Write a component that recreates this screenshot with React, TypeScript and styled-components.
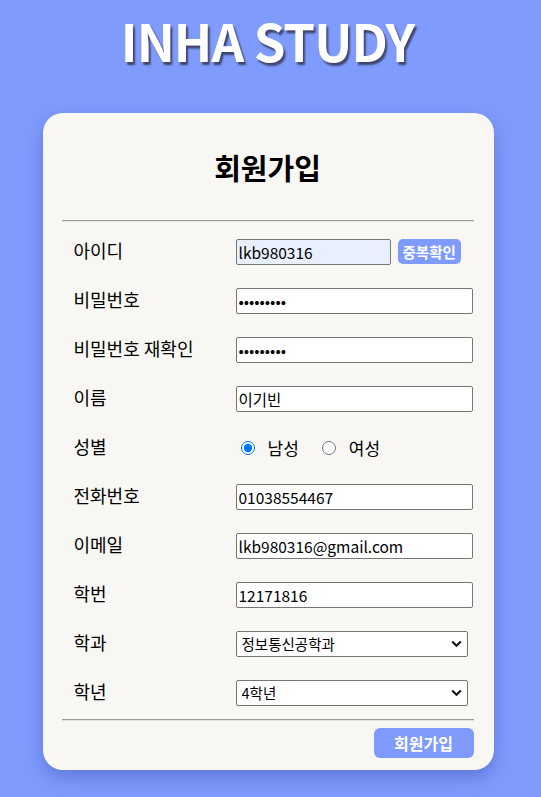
import React from "react";
import styled, { createGlobalStyle } from "styled-components";

const GlobalStyle = createGlobalStyle`
  html, body {
    margin: 0;
    padding: 0;
    background: #7f9bfe;
    font-family: "Noto Sans CJK KR", "Noto Sans", sans-serif;
  }
`;

const Page = styled.div`
  width: 541px;
  min-height: 797px;
  background: #7f9bfe;
  display: flex;
  flex-direction: column;
  align-items: center;
`;

const Logo = styled.h1`
  margin: 0 0 0 -6px;
  height: 113px;
  display: flex;
  align-items: flex-start;
  padding-top: 9px;
  box-sizing: border-box;
  color: #ffffff;
  font-size: 51px;
  font-weight: 700;
  letter-spacing: -1px;
  line-height: 62px;
  text-shadow: 2px 3px 2px rgba(40, 40, 60, 0.75);
`;

const Card = styled.div`
  width: 451px;
  box-sizing: border-box;
  margin-left: -5px;
  padding: 34px 20px 12px 19px;
  background: #f8f7f3;
  border-radius: 20px;
  box-shadow: 0 8px 18px rgba(40, 60, 150, 0.35);
`;

const Heading = styled.h2`
  margin: 0;
  height: 40px;
  line-height: 40px;
  text-align: center;
  font-size: 29px;
  font-weight: 700;
  color: #000;
`;

const Divider = styled.div<{ $top: number }>`
  height: 1px;
  margin-top: ${(p) => p.$top}px;
  background: #9a9a9a;
  border-bottom: 1px solid #e4e3df;
`;

const Rows = styled.div`
  display: flex;
  flex-direction: column;
  padding-top: 5px;
`;

const Row = styled.div`
  height: 49px;
  display: flex;
  align-items: center;
  padding-left: 12px;
`;

const Label = styled.label`
  width: 162px;
  flex-shrink: 0;
  font-size: 18px;
  color: #000;
  margin-top: -4px;
`;

const TextInput = styled.input<{ $width?: number; $filled?: boolean }>`
  width: ${(p) => p.$width ?? 237}px;
  height: 26px;
  box-sizing: border-box;
  border: 1px solid #767676;
  border-radius: 2px;
  padding: 0 2px;
  background: ${(p) => (p.$filled ? "#e8f0fe" : "#ffffff")};
  font-family: "Noto Sans CJK KR", "Noto Sans", sans-serif;
  font-size: 15.5px;
  color: #000;
  outline: none;
`;

const SmallButton = styled.button`
  margin-left: 7px;
  height: 25px;
  padding: 0 5px;
  border: none;
  border-radius: 5px;
  background: #7f9bfe;
  color: #ffffff;
  font-family: "Noto Sans CJK KR", "Noto Sans", sans-serif;
  font-size: 14.5px;
  font-weight: 700;
`;

const RadioGroup = styled.div`
  display: flex;
  align-items: center;
`;

const RadioOption = styled.label`
  display: flex;
  align-items: center;
  font-size: 17px;
  margin-right: 18px;
  input {
    width: 14px;
    height: 14px;
    margin: 0 13px 0 5px;
  }
`;

const SelectBox = styled.div`
  position: relative;
  width: 232px;
  height: 26px;
`;

const Select = styled.select`
  width: 100%;
  height: 100%;
  box-sizing: border-box;
  appearance: none;
  border: 1px solid #767676;
  border-radius: 2px;
  background: #ffffff;
  font-family: "Noto Sans CJK KR", "Noto Sans", sans-serif;
  font-size: 14.5px;
  color: #000;
  padding: 0 24px 0 5px;
`;

const Chevron = styled.svg`
  position: absolute;
  right: 6px;
  top: 9px;
  width: 11px;
  height: 8px;
  pointer-events: none;
`;

const Footer = styled.div`
  display: flex;
  justify-content: flex-end;
  padding-top: 7px;
`;

const SubmitButton = styled.button`
  width: 100px;
  height: 30px;
  border: none;
  border-radius: 6px;
  background: #7f9bfe;
  color: #ffffff;
  font-family: "Noto Sans CJK KR", "Noto Sans", sans-serif;
  font-size: 16px;
  font-weight: 700;
`;

const departments = ["정보통신공학과", "컴퓨터공학과", "전자공학과"];
const grades = ["1학년", "2학년", "3학년", "4학년"];

const Dropdown: React.FunctionComponent<{ options: string[]; value: string }> = ({
  options,
  value,
}) => (
  <SelectBox>
    <Select defaultValue={value}>
      {options.map((o) => (
        <option key={o}>{o}</option>
      ))}
    </Select>
    <Chevron viewBox="0 0 11 8">
      <path d="M1.2 1.5 L5.5 5.8 L9.8 1.5" fill="none" stroke="#111" strokeWidth="2" />
    </Chevron>
  </SelectBox>
);

const App: React.FunctionComponent<{}> = () => {
  const [gender, setGender] = React.useState("male");

  return (
    <Page>
      <GlobalStyle />
      <Logo>INHA STUDY</Logo>
      <Card>
        <Heading>회원가입</Heading>
        <Divider $top={33} />
        <Rows>
          <Row>
            <Label>아이디</Label>
            <TextInput $width={155} $filled defaultValue="lkb980316" />
            <SmallButton>중복확인</SmallButton>
          </Row>
          <Row>
            <Label>비밀번호</Label>
            <TextInput type="password" defaultValue="lkb980316" />
          </Row>
          <Row>
            <Label>비밀번호 재확인</Label>
            <TextInput type="password" defaultValue="lkb980316" />
          </Row>
          <Row>
            <Label>이름</Label>
            <TextInput defaultValue="이기빈" />
          </Row>
          <Row>
            <Label>성별</Label>
            <RadioGroup>
              <RadioOption>
                <input
                  type="radio"
                  name="gender"
                  checked={gender === "male"}
                  onChange={() => setGender("male")}
                />
                남성
              </RadioOption>
              <RadioOption>
                <input
                  type="radio"
                  name="gender"
                  checked={gender === "female"}
                  onChange={() => setGender("female")}
                />
                여성
              </RadioOption>
            </RadioGroup>
          </Row>
          <Row>
            <Label>전화번호</Label>
            <TextInput defaultValue="01038554467" />
          </Row>
          <Row>
            <Label>이메일</Label>
            <TextInput defaultValue="lkb980316@gmail.com" />
          </Row>
          <Row>
            <Label>학번</Label>
            <TextInput defaultValue="12171816" />
          </Row>
          <Row>
            <Label>학과</Label>
            <Dropdown options={departments} value="정보통신공학과" />
          </Row>
          <Row>
            <Label>학년</Label>
            <Dropdown options={grades} value="4학년" />
          </Row>
        </Rows>
        <Divider $top={2} />
        <Footer>
          <SubmitButton>회원가입</SubmitButton>
        </Footer>
      </Card>
    </Page>
  );
};

export default App;
